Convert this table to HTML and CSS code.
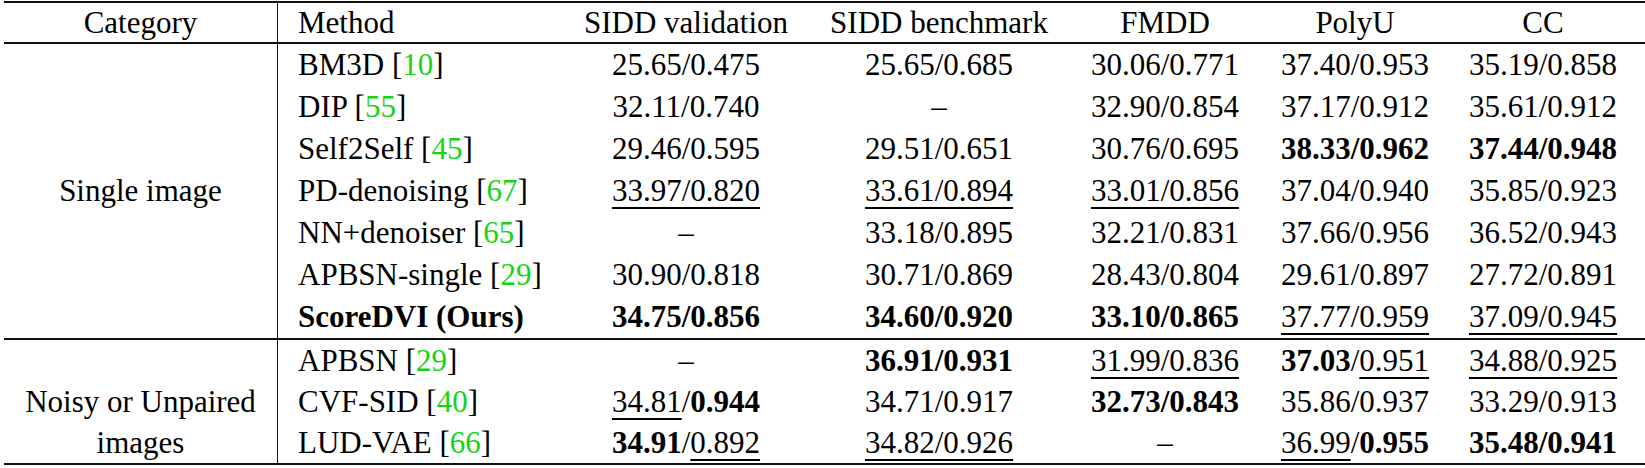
FILE: index.html
```html
<!DOCTYPE html>
<html>
<head>
<meta charset="utf-8">
<link rel="stylesheet" href="styles.css">
</head>
<body>
<table class="results">
  <colgroup>
    <col class="c-cat">
    <col class="c-method">
    <col class="c-val">
    <col class="c-bench">
    <col class="c-fmdd">
    <col class="c-poly">
    <col class="c-cc">
  </colgroup>
  <thead>
    <tr>
      <th class="cat">Category</th>
      <th class="method">Method</th>
      <th>SIDD validation</th>
      <th>SIDD benchmark</th>
      <th>FMDD</th>
      <th>PolyU</th>
      <th class="last">CC</th>
    </tr>
  </thead>
  <tbody class="group">
    <tr>
      <td class="cat single" rowspan="7">Single image</td>
      <td class="method">BM3D [<span class="cite">10</span>]</td>
      <td>25.65/0.475</td>
      <td>25.65/0.685</td>
      <td>30.06/0.771</td>
      <td>37.40/0.953</td>
      <td class="last">35.19/0.858</td>
    </tr>
    <tr>
      <td class="method">DIP [<span class="cite">55</span>]</td>
      <td>32.11/0.740</td>
      <td>–</td>
      <td>32.90/0.854</td>
      <td>37.17/0.912</td>
      <td class="last">35.61/0.912</td>
    </tr>
    <tr>
      <td class="method">Self2Self [<span class="cite">45</span>]</td>
      <td>29.46/0.595</td>
      <td>29.51/0.651</td>
      <td>30.76/0.695</td>
      <td><b>38.33/0.962</b></td>
      <td class="last"><b>37.44/0.948</b></td>
    </tr>
    <tr>
      <td class="method">PD-denoising [<span class="cite">67</span>]</td>
      <td><u>33.97/0.820</u></td>
      <td><u>33.61/0.894</u></td>
      <td><u>33.01/0.856</u></td>
      <td>37.04/0.940</td>
      <td class="last">35.85/0.923</td>
    </tr>
    <tr>
      <td class="method">NN+denoiser [<span class="cite">65</span>]</td>
      <td>–</td>
      <td>33.18/0.895</td>
      <td>32.21/0.831</td>
      <td>37.66/0.956</td>
      <td class="last">36.52/0.943</td>
    </tr>
    <tr>
      <td class="method">APBSN-single [<span class="cite">29</span>]</td>
      <td>30.90/0.818</td>
      <td>30.71/0.869</td>
      <td>28.43/0.804</td>
      <td>29.61/0.897</td>
      <td class="last">27.72/0.891</td>
    </tr>
    <tr class="end">
      <td class="method"><b>ScoreDVI (Ours)</b></td>
      <td><b>34.75/0.856</b></td>
      <td><b>34.60/0.920</b></td>
      <td><b>33.10/0.865</b></td>
      <td><u>37.77/0.959</u></td>
      <td class="last"><u>37.09/0.945</u></td>
    </tr>
  </tbody>
  <tbody class="group small">
    <tr>
      <td class="cat noisy" rowspan="3"><div class="cat-lines"><span>Noisy or Unpaired</span><span>images</span></div></td>
      <td class="method">APBSN [<span class="cite">29</span>]</td>
      <td>–</td>
      <td><b>36.91/0.931</b></td>
      <td><u>31.99/0.836</u></td>
      <td><b>37.03</b>/<u>0.951</u></td>
      <td class="last"><u>34.88/0.925</u></td>
    </tr>
    <tr>
      <td class="method">CVF-SID [<span class="cite">40</span>]</td>
      <td><u>34.81</u>/<b>0.944</b></td>
      <td>34.71/0.917</td>
      <td><b>32.73/0.843</b></td>
      <td>35.86/0.937</td>
      <td class="last">33.29/0.913</td>
    </tr>
    <tr class="end">
      <td class="method">LUD-VAE [<span class="cite">66</span>]</td>
      <td><b>34.91</b>/<u>0.892</u></td>
      <td><u>34.82/0.926</u></td>
      <td>–</td>
      <td><u>36.99</u>/<b>0.955</b></td>
      <td class="last"><b>35.48/0.941</b></td>
    </tr>
  </tbody>
</table>
</body>
</html>
```

FILE: styles.css
```css
html, body {
  margin: 0;
  padding: 0;
  background: #ffffff;
}

body {
  font-family: "Liberation Serif", "Times New Roman", serif;
  font-size: 31px;
  color: #000;
}

.results {
  margin: 1px 0 0 4px;
  width: 1641px;
  table-layout: fixed;
  border-collapse: separate;
  border-spacing: 0;
}

.c-cat { width: 274px; }
.c-method { width: 285px; }
.c-val { width: 246px; }
.c-bench { width: 260px; }
.c-fmdd { width: 192px; }
.c-poly { width: 188px; }
.c-cc { width: 196px; }

.results th,
.results td {
  box-sizing: border-box;
  padding: 0;
  text-align: center;
  vertical-align: middle;
  white-space: nowrap;
  font-weight: normal;
}

.results th {
  height: 43px;
  line-height: 39px;
  border-top: 2px solid #111;
  border-bottom: 2px solid #111;
}

.results td {
  height: 42px;
  line-height: 42px;
}

.group.small td {
  height: 41px;
  line-height: 41px;
}

.results tr.end td,
.results td.cat {
  border-bottom: 2px solid #111;
}

.results tr.end td {
  height: 44px;
}

.group.small tr.end td {
  height: 43px;
}

.results .cat {
  border-right: 1px solid #111;
}

.results .method {
  text-align: left;
  padding-left: 20px;
}

.results .last {
  padding-right: 8px;
}

.cite {
  color: #14d414;
}

b {
  font-weight: bold;
}

u {
  text-decoration: underline;
  text-decoration-thickness: 1.5px;
  text-underline-offset: 6px;
}

.results td.noisy {
  vertical-align: top;
  padding-top: 41px;
}

.cat-lines {
  display: flex;
  flex-direction: column;
  align-items: center;
  line-height: 41px;
}
```
